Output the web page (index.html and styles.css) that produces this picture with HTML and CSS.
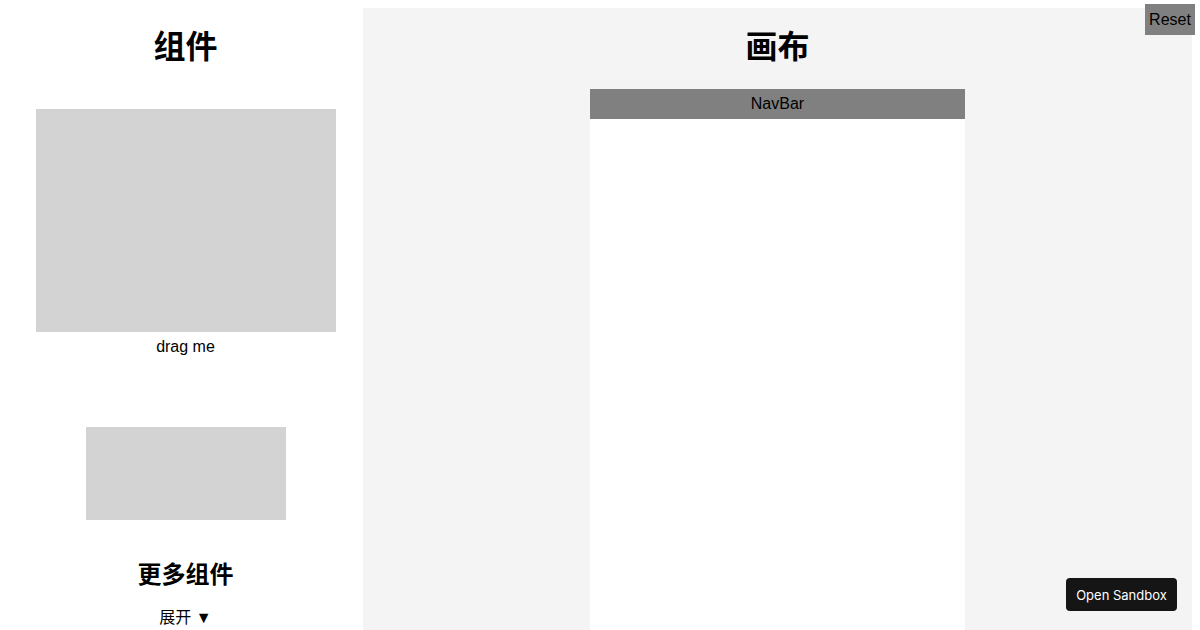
FILE: index.html
```html
<!DOCTYPE html>
<html>
<head>
<meta name="viewport" content="width=device-width, initial-scale=1">
<link rel="stylesheet" href="styles.css">
</head>
<body>

<div class="layout">
  <div class="sidebar">
    <h1 class="title">组件</h1>
    <div class="drag_box"></div>
    <div class="caption">drag me</div>
    <div class="small_box"></div>
    <h2 class="subtitle">更多组件</h2>
    <div class="toggle">展开 ▼</div>
  </div>

  <div class="canvas">
    <h1 class="title">画布</h1>
    <div class="phone">
      <div class="navbar">NavBar</div>
    </div>
  </div>
</div>

<button class="reset_btn">Reset</button>
<button class="sandbox_btn">Open Sandbox</button>

</body>
</html>
```

FILE: styles.css
```css
body {
    margin: 8px;
    font-family: "Liberation Sans", Arial, "Noto Sans CJK SC", sans-serif;
    font-size: 16px;
    color: #000;
    background: #fff;
}

.layout {
    display: flex;
    align-items: stretch;
}

.sidebar {
    width: 355px;
    display: flex;
    flex-direction: column;
    align-items: center;
}

.title {
    font-size: 32px;
    line-height: 37px;
    font-weight: bold;
    margin: 21px 0 23px;
    text-align: center;
}

.drag_box {
    width: 300px;
    height: 223px;
    margin-top: 20px;
    background-color: #d3d3d3;
}

.caption {
    line-height: 18px;
    margin-top: 6px;
}

.small_box {
    width: 200px;
    height: 93px;
    margin-top: 71px;
    background-color: #d3d3d3;
}

.subtitle {
    font-size: 24px;
    line-height: 28px;
    font-weight: bold;
    margin: 41px 0 0;
}

.toggle {
    line-height: 18px;
    margin-top: 20px;
}

.canvas {
    flex: 1;
    min-height: 640px;
    background-color: #f4f4f4;
    display: flex;
    flex-direction: column;
    align-items: center;
}

.phone {
    width: 375px;
    flex: 1;
    background-color: #fff;
}

.navbar {
    height: 30px;
    line-height: 30px;
    background-color: #808080;
    text-align: center;
}

.reset_btn {
    position: fixed;
    top: 4px;
    right: 5px;
    width: 50px;
    height: 31px;
    padding: 0;
    border: none;
    background-color: #808080;
    font-family: "Liberation Sans", Arial, sans-serif;
    font-size: 16px;
    color: #000;
}

.sandbox_btn {
    position: fixed;
    right: 23px;
    bottom: 19px;
    width: 111px;
    height: 33px;
    padding: 0;
    border: none;
    border-radius: 4px;
    background-color: #151515;
    color: #fff;
    font-family: Inter, "Noto Sans", sans-serif;
    font-size: 13px;
}
```
